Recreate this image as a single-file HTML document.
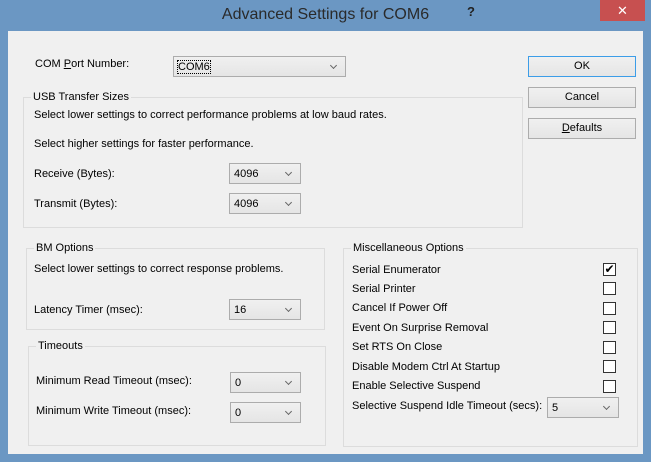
<!DOCTYPE html>
<html><head><style>
*{box-sizing:border-box;margin:0;padding:0}
body{width:651px;height:462px;background:#6b97c3;font-family:"Liberation Sans",sans-serif;font-size:11px;color:#000;position:relative;overflow:hidden}
.a{position:absolute;white-space:nowrap}
#client{position:absolute;left:8px;top:31px;width:635px;height:423px;background:#f0f0f0}
.title{position:absolute;left:0;top:6px;width:651px;text-align:center;font-size:16px;color:#2a2a2a}
.close{position:absolute;left:600px;top:0;width:45px;height:21px;background:#c75050;color:#fff;text-align:center;font-size:13px;line-height:21px}
.grp{position:absolute;border:1px solid #dcdcdc}
.gl{position:absolute;background:#f0f0f0;padding:0 2px;top:-7px;left:7px}
.cb{position:absolute;height:21px;border:1px solid #acacac;background:linear-gradient(#f0f0f0,#e5e5e5);padding:4px 0 0 4px}
.cb::after{content:"";position:absolute;right:9px;top:6px;width:4px;height:4px;border-right:1.5px solid #666;border-bottom:1.5px solid #666;transform:rotate(45deg)}
.btn{position:absolute;left:528px;width:108px;height:21px;border:1px solid #acacac;background:linear-gradient(#f0f0f0,#e5e5e5);text-align:center;line-height:19px}
.chk{position:absolute;left:603px;width:13px;height:13px;border:1px solid #333;background:#fff}
</style></head><body>
<div class="title">Advanced Settings for COM6</div>
<div class="a" style="left:467px;top:4px;font-size:13px;font-weight:bold;color:#222">?</div>
<div class="close">✕</div>
<div id="client"></div>
<div class="a" style="left:35px;top:58px">COM <u>P</u>ort Number:</div>
<div class="cb" style="left:173px;top:56px;width:173px"><span style="outline:1px dotted #000">COM6</span></div>
<div class="btn" style="top:56px;border-color:#3c9de8">OK</div>
<div class="btn" style="top:87px">Cancel</div>
<div class="btn" style="top:118px"><u>D</u>efaults</div>

<div class="grp" style="left:23px;top:97px;width:500px;height:131px"><div class="gl">USB Transfer Sizes</div></div>
<div class="a" style="left:34px;top:109px">Select lower settings to correct performance problems at low baud rates.</div>
<div class="a" style="left:34px;top:138px">Select higher settings for faster performance.</div>
<div class="a" style="left:34px;top:168px">Receive (Bytes):</div>
<div class="cb" style="left:229px;top:163px;width:72px">4096</div>
<div class="a" style="left:34px;top:198px">Transmit (Bytes):</div>
<div class="cb" style="left:229px;top:193px;width:72px">4096</div>

<div class="grp" style="left:26px;top:248px;width:299px;height:82px"><div class="gl">BM Options</div></div>
<div class="a" style="left:34px;top:263px">Select lower settings to correct response problems.</div>
<div class="a" style="left:34px;top:304px">Latency Timer (msec):</div>
<div class="cb" style="left:229px;top:299px;width:72px">16</div>

<div class="grp" style="left:28px;top:346px;width:298px;height:100px"><div class="gl">Timeouts</div></div>
<div class="a" style="left:36px;top:375px">Minimum Read Timeout (msec):</div>
<div class="cb" style="left:230px;top:372px;width:71px">0</div>
<div class="a" style="left:36px;top:405px">Minimum Write Timeout (msec):</div>
<div class="cb" style="left:230px;top:402px;width:71px">0</div>

<div class="grp" style="left:343px;top:248px;width:295px;height:199px"><div class="gl" style="left:7px">Miscellaneous Options</div></div>
<div class="a" style="left:352px;top:264px">Serial Enumerator</div>
<div class="chk" style="top:263px;font-size:12px;line-height:10px;text-align:center">✔</div>
<div class="a" style="left:352px;top:283px">Serial Printer</div><div class="chk" style="top:282px"></div>
<div class="a" style="left:352px;top:302px">Cancel If Power Off</div><div class="chk" style="top:302px"></div>
<div class="a" style="left:352px;top:322px">Event On Surprise Removal</div><div class="chk" style="top:321px"></div>
<div class="a" style="left:352px;top:341px">Set RTS On Close</div><div class="chk" style="top:341px"></div>
<div class="a" style="left:352px;top:361px">Disable Modem Ctrl At Startup</div><div class="chk" style="top:360px"></div>
<div class="a" style="left:352px;top:380px">Enable Selective Suspend</div><div class="chk" style="top:380px"></div>
<div class="a" style="left:352px;top:400px">Selective Suspend Idle Timeout (secs):</div>
<div class="cb" style="left:547px;top:397px;width:72px">5</div>
</body></html>
